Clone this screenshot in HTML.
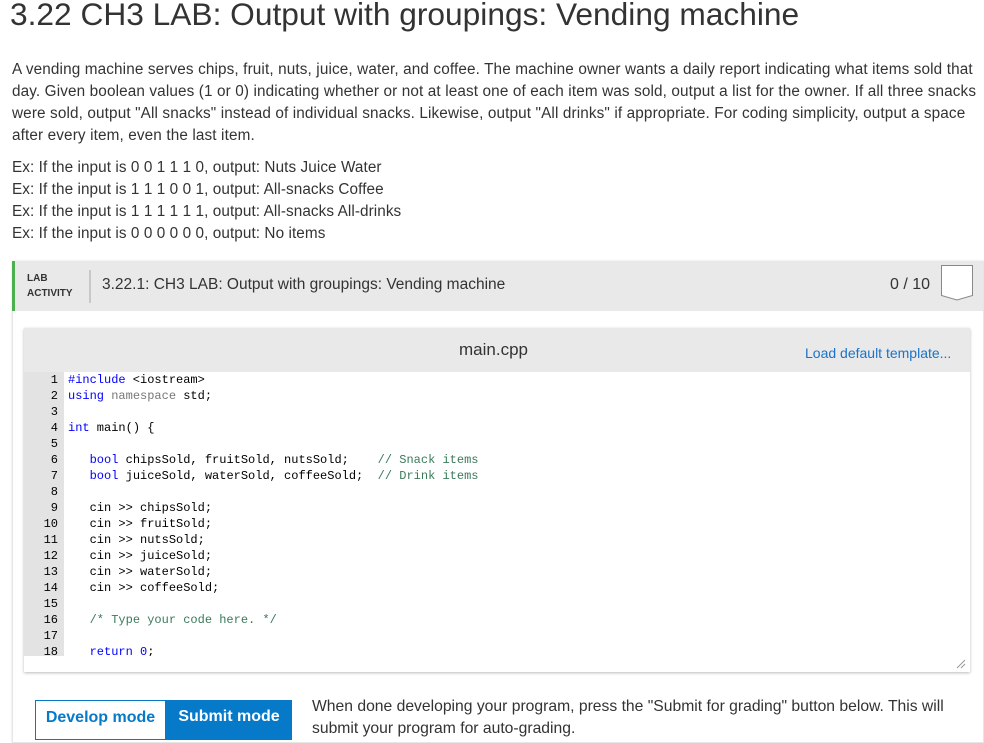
<!DOCTYPE html>
<html><head><style>
body{margin:0;width:984px;height:730px;overflow:hidden;background:#fff;font-family:"Liberation Sans",sans-serif;color:#333;position:relative}
.a{position:absolute}
h1{position:absolute;left:10px;top:-4px;margin:0;font-size:31.7px;font-weight:400;color:#333;white-space:nowrap}
p{margin:0}
.para{left:12px;top:59px;width:972px;font-size:15.3px;line-height:22px;letter-spacing:0.13px}
.ex{left:12px;top:157px;font-size:15.3px;line-height:22px;letter-spacing:0.08px}
.card{left:12px;top:261px;width:970px;height:480px;border:1px solid #e6e6e6;box-shadow:0 0 2px #ddd}
.hdr{left:12px;top:261px;width:971px;height:50px;background:#e9e9e9;border-left:3px solid #4caf50;box-sizing:border-box}
.ed{left:24px;top:328px;width:946px;height:344px;background:#fff;box-shadow:0 1px 3px #bbb}
.edh{left:24px;top:328px;width:946px;height:44px;background:#e9e9e9}
.gut{left:24px;top:372px;width:40px;height:284px;background:#e3e3e3}
pre{position:absolute;margin:0;font-family:"Liberation Mono",monospace;font-size:12px;line-height:16px;color:#000}
.k{color:#00f}.c{color:#3a7a5a}.g{color:#777}
</style></head><body>
<h1>3.22 CH3 LAB: Output with groupings: Vending machine</h1>
<p class="a para">A vending machine serves chips, fruit, nuts, juice, water, and coffee. The machine owner wants a daily report indicating what items sold that day. Given boolean values (1 or 0) indicating whether or not at least one of each item was sold, output a list for the owner. If all three snacks were sold, output "All snacks" instead of individual snacks. Likewise, output "All drinks" if appropriate. For coding simplicity, output a space after every item, even the last item.</p>
<p class="a ex">Ex: If the input is 0 0 1 1 1 0, output: Nuts Juice Water<br>Ex: If the input is 1 1 1 0 0 1, output: All-snacks Coffee<br>Ex: If the input is 1 1 1 1 1 1, output: All-snacks All-drinks<br>Ex: If the input is 0 0 0 0 0 0, output: No items</p>
<div class="a card"></div>
<div class="a hdr"></div>
<div class="a" style="left:27px;top:271px;font-size:10px;font-weight:700;line-height:15px;color:#333">LAB<br>ACTIVITY</div>
<div class="a" style="left:89px;top:270px;width:2px;height:33px;background:#c8c8c8"></div>
<div class="a" style="left:102px;top:276px;font-size:15.5px;color:#333">3.22.1: CH3 LAB: Output with groupings: Vending machine</div>
<div class="a" style="left:890px;top:276px;font-size:16px;color:#333">0 / 10</div>
<svg class="a" style="left:940px;top:264px" width="35" height="40"><path d="M1.5 1.5H32.5V31.5L17 36L1.5 31.5Z" fill="#fff" stroke="#888" stroke-width="1"/></svg>
<div class="a ed"></div>
<div class="a edh"></div>
<div class="a" style="left:459px;top:340px;font-size:17px;color:#333">main.cpp</div>
<div class="a" style="left:805px;top:345px;font-size:14px;color:#1a73c8">Load default template...</div>
<div class="a gut"></div>
<pre style="left:24px;top:372px;width:34px;text-align:right;height:284px;overflow:hidden">1
2
3
4
5
6
7
8
9
10
11
12
13
14
15
16
17
18</pre>
<pre style="left:68px;top:372px;height:284px;overflow:hidden"><span class="k">#include</span> &lt;iostream&gt;
<span class="k">using</span> <span class="g">namespace</span> std;

<span class="k">int</span> main() {

   <span class="k">bool</span> chipsSold, fruitSold, nutsSold;    <span class="c">// Snack items</span>
   <span class="k">bool</span> juiceSold, waterSold, coffeeSold;  <span class="c">// Drink items</span>

   cin &gt;&gt; chipsSold;
   cin &gt;&gt; fruitSold;
   cin &gt;&gt; nutsSold;
   cin &gt;&gt; juiceSold;
   cin &gt;&gt; waterSold;
   cin &gt;&gt; coffeeSold;

   <span class="c">/* Type your code here. */</span>

   <span class="k">return</span> <span class="k">0</span>;</pre>
<svg class="a" style="left:956px;top:659px" width="10" height="10"><path d="M1 9L9 1M5 9L9 5" stroke="#999"/></svg>
<div class="a" style="left:35px;top:700px;width:131px;height:40px;border:1px solid #0679c9;box-sizing:border-box;color:#0679c9;font-weight:700;font-size:16px;text-align:center;line-height:34px">Develop mode</div>
<div class="a" style="left:166px;top:700px;width:126px;height:40px;background:#0679c9;color:#fff;font-weight:700;font-size:16px;text-align:center;line-height:34px">Submit mode</div>
<div class="a" style="left:312px;top:696px;width:650px;font-size:15.7px;line-height:22px;color:#333">When done developing your program, press the "Submit for grading" button below. This will submit your program for auto-grading.</div>
</body></html>
